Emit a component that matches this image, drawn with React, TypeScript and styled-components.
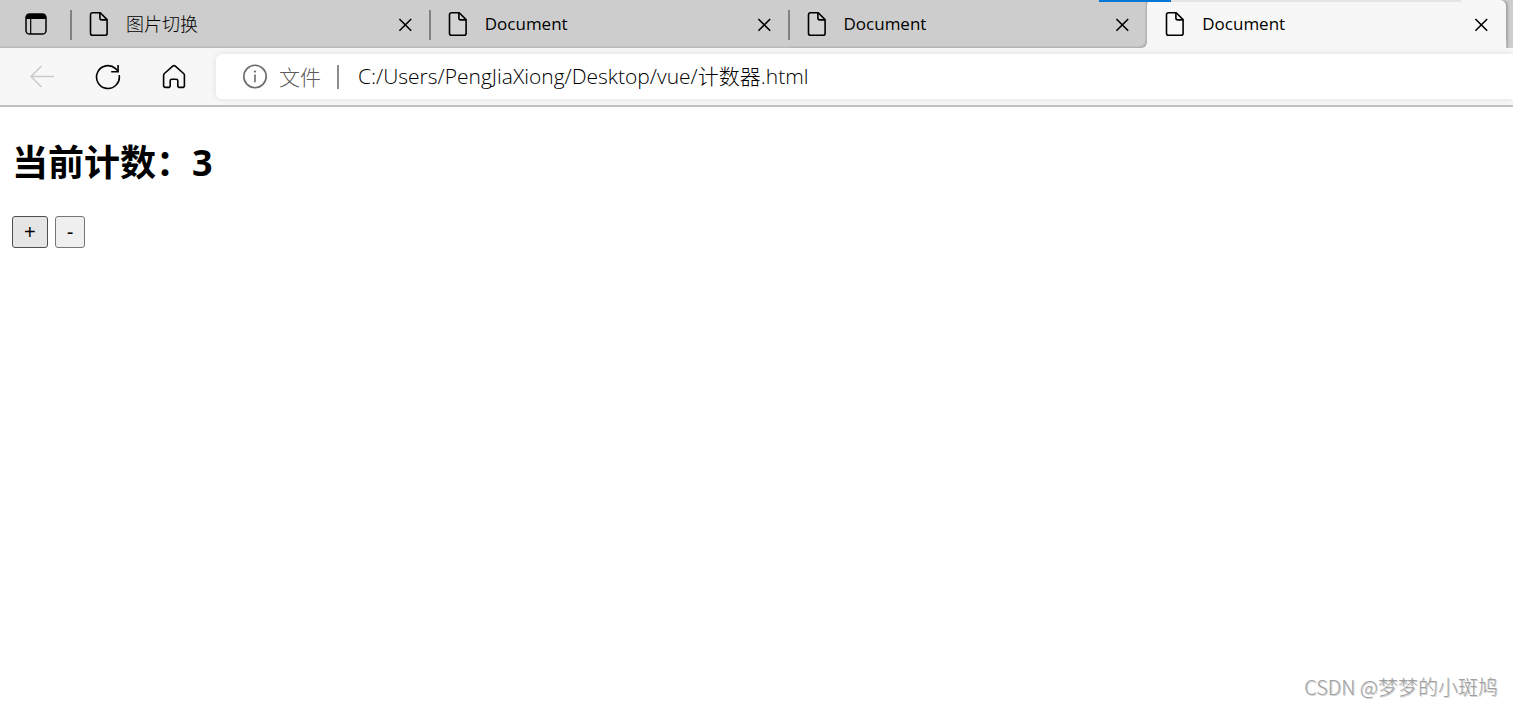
import React, { useState } from "react";
import styled, { createGlobalStyle, css } from "styled-components";

const uiFont = `"Open Sans", "Noto Sans CJK SC", sans-serif`;

const GlobalStyle = createGlobalStyle`
  * { box-sizing: border-box; }
  body { margin: 0; background: #fff; color: #000; font-family: ${uiFont}; }
`;

const Page = styled.div`
  display: flex;
  flex-direction: column;
  min-height: 100vh;
`;

const TabStrip = styled.div`
  display: flex;
  height: 48px;
  padding-right: 7px;
  background: linear-gradient(#f7f7f7, #f7f7f7) right 7px bottom / 50% 8px no-repeat, #cdcdcd;
`;

const IconButton = styled.button`
  display: flex;
  align-items: center;
  justify-content: center;
  flex: none;
  margin: 0;
  padding: 0;
  border: 0;
  background: none;
  color: #000;
`;

const TabMenuButton = styled(IconButton)`
  width: 71px;
  box-shadow: inset 0 -2px 2px -1px rgba(0, 0, 0, 0.14);
`;

const Tab = styled.div<{ $active?: boolean; $beforeActive?: boolean }>`
  position: relative;
  display: flex;
  flex: 1;
  align-items: center;
  min-width: 0;
  padding: 0 18px;
  background: #cdcdcd;
  ${(p) =>
    p.$active
      ? css`
          background: #f7f7f7;
          border-radius: 6px 6px 0 0;
          box-shadow: 2px 0 2px rgba(0, 0, 0, 0.2);
        `
      : css`
          box-shadow: inset 0 -2px 2px -1px rgba(0, 0, 0, 0.14);
          &::before {
            content: "";
            position: absolute;
            left: -1px;
            top: 10px;
            width: 2px;
            height: 30px;
            background: #818181;
          }
        `}
  ${(p) =>
    p.$beforeActive &&
    css`
      border-radius: 0 0 6px 0;
      box-shadow: inset -2px -2px 2px -1px rgba(0, 0, 0, 0.18);
    `}
`;

const TabTitle = styled.span`
  flex: 1;
  min-width: 0;
  margin-left: 17px;
  padding-bottom: 1px;
  overflow: hidden;
  font-size: 17px;
  line-height: 28px;
  white-space: nowrap;
  &:lang(zh) {
    font-size: 18px;
    font-weight: 300;
  }
`;

const Progress = styled.div`
  position: absolute;
  left: -48px;
  right: 45px;
  top: 0;
  height: 2px;
  background: linear-gradient(to right, #0078d4 72px, #e5e5e5 72px);
`;

const Toolbar = styled.div`
  position: relative;
  display: flex;
  align-items: center;
  height: 59px;
  padding: 1px 0 1px 9px;
  border-bottom: 2px solid #c0c0c0;
  background: #f7f7f7;
`;

const NavButton = styled(IconButton)`
  width: 66px;
  height: 44px;
  &:disabled { color: #cacaca; }
`;

const AddressBar = styled.div`
  display: flex;
  flex: 1;
  align-items: center;
  height: 45px;
  margin-left: 9px;
  padding-left: 27px;
  border-radius: 6px 0 0 6px;
  background: #fff;
  box-shadow: 0 0 6px rgba(0, 0, 0, 0.1);
`;

const Scheme = styled.label`
  margin-left: 11px;
  padding-right: 16px;
  border-right: 2px solid #8c8c8c;
  color: #5c5c5c;
  font-size: 21px;
  font-weight: 300;
  line-height: 24px;
`;

const UrlInput = styled.input`
  flex: 1;
  min-width: 0;
  margin-left: 19px;
  padding: 0 0 2px;
  border: 0;
  outline: 0;
  background: none;
  color: #000;
  font-family: ${uiFont};
  font-size: 21px;
  font-weight: 300;
  line-height: 30px;
`;

const Content = styled.main`
  flex: 1;
  padding: 32px 12px;
`;

const Heading = styled.h2`
  margin: 0;
  font-size: 36px;
  font-weight: 700;
  line-height: 48px;
`;

const Buttons = styled.div`
  display: flex;
  gap: 7px;
  margin-top: 29px;
`;

const CountButton = styled.button<{ $pressed?: boolean }>`
  height: 32px;
  padding: 0 11px;
  border: 1px solid ${(p) => (p.$pressed ? "#4f4f4f" : "#767676")};
  border-radius: 3px;
  background: ${(p) => (p.$pressed ? "#e5e5e5" : "#efefef")};
  color: #000;
  font-family: "Liberation Sans", Arial, sans-serif;
  font-size: 20px;
`;

const Watermark = styled.footer`
  padding: 0 15px 5px;
  color: #a0a0a0;
  font-family: "Noto Sans CJK SC", sans-serif;
  font-size: 20px;
  font-weight: 300;
  line-height: 30px;
  text-align: right;
  text-shadow: 1px 1px 0 #d4d4d4;
`;

const FileIcon = () => (
  <svg width="20" height="26" viewBox="0 0 20 26" fill="none" stroke="#000" strokeWidth="1.6" strokeLinejoin="round" aria-hidden="true">
    <path d="M3.6 1.7H11.2L18.1 8.6V22.2Q18.1 24.3 16 24.3H3.6Q1.5 24.3 1.5 22.2V3.8Q1.5 1.7 3.6 1.7Z" fill="#ffffff22" />
    <path d="M10.9 1.8V7.1Q10.9 8.9 12.7 8.9H18" />
  </svg>
);

const CloseIcon = () => (
  <svg width="14" height="15" viewBox="0 0 14 15" stroke="#000" strokeWidth="1.6" aria-hidden="true">
    <path d="M1.4 2L13.2 13.8M13.2 2L1.4 13.8" />
  </svg>
);

const TabMenuIcon = () => (
  <svg width="22" height="22" viewBox="0 0 22 22" aria-hidden="true">
    <rect x="1" y="1" width="20" height="20" rx="3.6" fill="none" stroke="#000" strokeWidth="1.5" />
    <path d="M1 6V4Q1 1 4 1H18Q21 1 21 4V6Z" fill="#000" />
    <path d="M5.7 5V21" stroke="#000" strokeWidth="1.2" />
  </svg>
);

const BackIcon = () => (
  <svg width="26" height="24" viewBox="0 0 26 24" fill="none" stroke="currentColor" strokeWidth="1.5" aria-hidden="true">
    <path d="M25 11.5H2M12.5 1L2 11.5L12.5 22" />
  </svg>
);

const ReloadIcon = () => (
  <svg width="26" height="26" viewBox="0 0 26 26" fill="none" stroke="currentColor" strokeWidth="1.6" aria-hidden="true">
    <path d="M24.2 11.2A11.4 11.4 0 1 1 20.6 4.6L23.1 7.2" />
    <path d="M23.1 1V7.7H16.2" />
  </svg>
);

const HomeIcon = () => (
  <svg width="24" height="26" viewBox="0 0 24 26" fill="none" stroke="currentColor" strokeWidth="1.6" strokeLinejoin="round" aria-hidden="true">
    <path d="M1.6 11.2Q1.6 10.2 2.4 9.5L10.7 2.2Q12 1.1 13.3 2.2L21.6 9.5Q22.4 10.2 22.4 11.2V21.4Q22.4 23.4 20.4 23.4H17.7Q15.8 23.4 15.8 21.4V16.8Q15.8 15.2 14.2 15.2H9.8Q8.2 15.2 8.2 16.8V21.4Q8.2 23.4 6.3 23.4H3.6Q1.6 23.4 1.6 21.4Z" />
  </svg>
);

const InfoIcon = () => (
  <svg width="25" height="25" viewBox="0 0 25 25" fill="none" stroke="#6b6b6b" aria-hidden="true">
    <circle cx="12" cy="12.5" r="11.2" strokeWidth="1.6" />
    <path d="M12 10.6V18.2" strokeWidth="1.6" />
    <circle cx="12" cy="7.6" r="1.1" fill="#6b6b6b" stroke="none" />
  </svg>
);

const tabs = [
  { title: "图片切换", lang: "zh" },
  { title: "Document", lang: "en" },
  { title: "Document", lang: "en" },
  { title: "Document", lang: "en" },
];

export default function App() {
  const [count, setCount] = useState(3);
  const activeTab = tabs.length - 1;

  return (
    <Page>
      <GlobalStyle />
      <TabStrip>
        <TabMenuButton aria-label="Tab actions">
          <TabMenuIcon />
        </TabMenuButton>
        {tabs.map((tab, i) => (
          <Tab key={i} $active={i === activeTab} $beforeActive={i === activeTab - 1}>
            {i === activeTab && <Progress />}
            <FileIcon />
            <TabTitle lang={tab.lang}>{tab.title}</TabTitle>
            <IconButton aria-label="Close tab">
              <CloseIcon />
            </IconButton>
          </Tab>
        ))}
      </TabStrip>
      <Toolbar>
        <NavButton aria-label="Back" disabled>
          <BackIcon />
        </NavButton>
        <NavButton aria-label="Reload">
          <ReloadIcon />
        </NavButton>
        <NavButton aria-label="Home">
          <HomeIcon />
        </NavButton>
        <AddressBar>
          <InfoIcon />
          <Scheme htmlFor="address">文件</Scheme>
          <UrlInput id="address" defaultValue="C:/Users/PengJiaXiong/Desktop/vue/计数器.html" />
        </AddressBar>
      </Toolbar>
      <Content>
        <Heading>当前计数：{count}</Heading>
        <Buttons>
          <CountButton $pressed onClick={() => setCount(count + 1)}>+</CountButton>
          <CountButton onClick={() => setCount(count - 1)}>-</CountButton>
        </Buttons>
      </Content>
      <Watermark>CSDN @梦梦的小斑鸠</Watermark>
    </Page>
  );
}
